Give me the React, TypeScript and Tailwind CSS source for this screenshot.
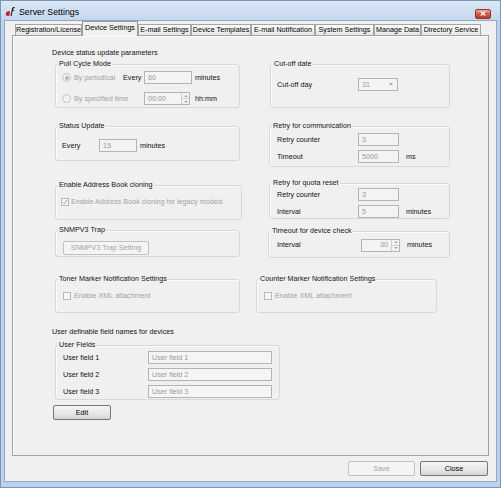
import type { ReactNode } from 'react'

const font = "font-['Liberation_Sans',Arial,sans-serif] text-[7.2px] leading-[10px]"

function Group({ title, className, children }: { title: string; className: string; children?: ReactNode }) {
  return (
    <fieldset className={`shrink-0 rounded-[3px] border border-[#d6d9dc] shadow-[inset_1px_1px_0_#fcfcfc] ${className}`}>
      <legend className="ml-[2px] h-[10px] px-[1px] text-[#111]">{title}</legend>
      {children}
    </fieldset>
  )
}

function Box({ value, className = '' }: { value: string; className?: string }) {
  return (
    <div className={`flex h-[13px] shrink-0 items-center border border-[#b4b4b4] bg-[#f3f3f3] px-[3px] text-[#9a9a9a] ${className}`}>
      {value}
    </div>
  )
}

function Spinner({ value, className = '', align = 'left' }: { value: string; className?: string; align?: 'left' | 'right' }) {
  return (
    <div className={`flex h-[13px] shrink-0 border border-[#b4b4b4] bg-[#f3f3f3] text-[#9a9a9a] ${className}`}>
      <div className={`flex flex-1 items-center px-[3px] ${align === 'right' ? 'justify-end' : ''}`}>{value}</div>
      <div className="flex w-[8px] flex-col border-l border-[#d0d0d0]">
        <div className="flex flex-1 items-center justify-center border-b border-[#d0d0d0]">
          <svg width="4" height="2" viewBox="0 0 4 2">
            <path d="M0 2 L2 0 L4 2Z" fill="#a8a8a8" />
          </svg>
        </div>
        <div className="flex flex-1 items-center justify-center">
          <svg width="4" height="2" viewBox="0 0 4 2">
            <path d="M0 0 L2 2 L4 0Z" fill="#a8a8a8" />
          </svg>
        </div>
      </div>
    </div>
  )
}

function Radio({ checked }: { checked?: boolean }) {
  return (
    <div className="flex h-[9px] w-[9px] shrink-0 items-center justify-center rounded-full border border-[#c2c2c2] bg-[#f2f2f2]">
      {checked && <div className="h-[4px] w-[4px] rounded-full bg-[#b3b3b3]" />}
    </div>
  )
}

function Check({ checked }: { checked?: boolean }) {
  return (
    <div className="flex h-[8px] w-[8px] shrink-0 items-center justify-center border border-[#b9b9b9] bg-[#f6f6f6]">
      {checked && (
        <svg width="6" height="6" viewBox="0 0 6 6">
          <path d="M0.8 3.2 L2.4 4.8 L5.3 0.9" fill="none" stroke="#a0a0a0" strokeWidth="1" />
        </svg>
      )}
    </div>
  )
}

function Button({ label, disabled, className = '' }: { label: string; disabled?: boolean; className?: string }) {
  return (
    <div
      className={`flex shrink-0 items-center justify-center rounded-[2px] border ${
        disabled
          ? 'border-[#bfc3c6] bg-[#f4f4f4] text-[#a3a3a3]'
          : 'border-[#767676] bg-gradient-to-b from-[#f4f4f4] via-[#e9e9e9] to-[#d4d4d4] text-black'
      } ${className}`}
    >
      {label}
    </div>
  )
}

const tabs = [
  { label: 'Registration/License', w: 'w-[67px]' },
  { label: 'Device Settings', w: 'w-[56px]', active: true },
  { label: 'E-mail Settings', w: 'w-[53px]' },
  { label: 'Device Templates', w: 'w-[60px]' },
  { label: 'E-mail Notification', w: 'w-[64px]' },
  { label: 'System Settings', w: 'w-[59px]' },
  { label: 'Manage Data', w: 'w-[47px]' },
  { label: 'Directory Service', w: 'w-[60px]' },
]

export default function App() {
  return (
    <div className={`flex h-[488px] w-[501px] flex-col border border-[#7a96b8] bg-[#bcd2eb] text-[#111] ${font}`}>
      {/* title bar */}
      <div className="flex h-[19px] shrink-0 items-center bg-gradient-to-b from-[#dce8f5] to-[#c3d7ee] pl-[4px] pr-[9px]">
        <svg width="10" height="11" viewBox="0 0 10 11" className="mt-[1px]">
          <path d="M1 9.5 C0 7 2.5 4.5 5 5.5 L4.2 10 Z" fill="#c8171e" />
          <path d="M5.5 10 L7 2.5 C7.4 1 8.6 0.6 9.8 1.2 L9.4 2.3 C8.7 2 8.3 2.3 8.1 3 L7.9 4 L9.3 4 L9 5 L7.6 5 L6.6 10 Z" fill="#1b1b1b" />
        </svg>
        <span className="ml-[4px] mt-[2px] text-[8.8px] text-black">Server Settings</span>
        <div className="ml-auto mt-[6px] flex h-[10px] w-[16px] items-center justify-center rounded-[2px] border border-[#8a3a2c] bg-gradient-to-b from-[#e9a99a] via-[#d2583c] to-[#c03a20]">
          <svg width="6" height="5" viewBox="0 0 6 5">
            <path d="M0.8 0.5 L5.2 4.5 M5.2 0.5 L0.8 4.5" stroke="#fff" strokeWidth="1.3" />
          </svg>
        </div>
      </div>

      {/* body */}
      <div className="mx-[3px] mb-[5px] flex flex-1 flex-col border border-[#8fa8c6] bg-[#f0f0f0] pr-[8px]">
        {/* tabs */}
        <div className="ml-[10px] flex h-[14px] shrink-0 items-end">
          {tabs.map((t) => (
            <div
              key={t.label}
              className={`flex shrink-0 items-center justify-center whitespace-nowrap border border-b-0 text-black ${t.w} ${
                t.active
                  ? 'relative z-10 -mb-px h-[15px] border-[#9a9a9a] bg-[#f0f0f0] pb-[2px]'
                  : 'h-[11px] border-[#a5a5a5] bg-gradient-to-b from-[#fbfbfb] to-[#e6e6e6]'
              }`}
            >
              {t.label}
            </div>
          ))}
        </div>

        {/* panel */}
        <div className="ml-[7px] flex h-[421px] w-[477px] shrink-0 flex-col border border-[#a2a2a2] pl-[42px] shadow-[inset_1px_1px_0_#fbfbfb]">
          <div className="-ml-[3px] mt-[12px] h-[10px]">Device status update parameters</div>

          {/* row 1 */}
          <div className="mt-[1px] flex items-start">
            <Group title="Poll Cycle Mode" className="h-[49px] w-[185px]">
              <div className="mt-[2px] flex h-[13px] items-center pl-[6px]">
                <div className="flex w-[61px] items-center gap-[3px] text-[#a2a2a2]">
                  <Radio checked />
                  <span>By periodical</span>
                </div>
                <span className="w-[21px]">Every</span>
                <Box value="60" className="w-[48px]" />
                <span className="ml-[3px]">minutes</span>
              </div>
              <div className="mt-[8px] flex h-[13px] items-center pl-[6px]">
                <div className="flex w-[82px] items-center gap-[3px] text-[#a2a2a2]">
                  <Radio />
                  <span>By specified time</span>
                </div>
                <Spinner value="00:00" className="w-[46px]" />
                <span className="ml-[5px]">hh:mm</span>
              </div>
            </Group>
            <Group title="Cut-off date" className="ml-[30px] h-[49px] w-[180px]">
              <div className="mt-[9px] flex h-[13px] items-center pl-[6px]">
                <span className="w-[81px]">Cut-off day</span>
                <div className="flex h-[13px] w-[40px] items-center justify-between border border-[#b4b4b4] bg-[#f3f3f3] pl-[3px] pr-[4px] text-[#9a9a9a]">
                  <span>31</span>
                  <svg width="4" height="3" viewBox="0 0 4 3">
                    <path d="M0 0 L2 2.5 L4 0Z" fill="#a0a0a0" />
                  </svg>
                </div>
              </div>
            </Group>
          </div>

          {/* row 2 */}
          <div className="mt-[13px] flex items-start">
            <Group title="Status Update" className="h-[40px] w-[185px]">
              <div className="mt-[8px] flex h-[13px] items-center pl-[6px]">
                <span className="w-[37px]">Every</span>
                <Box value="15" className="w-[38px]" />
                <span className="ml-[3px]">minutes</span>
              </div>
            </Group>
            <Group title="Retry for communication" className="ml-[29px] h-[46px] w-[181px]">
              <div className="mt-[2px] flex h-[13px] items-center pl-[7px]">
                <span className="w-[81px]">Retry counter</span>
                <Box value="3" className="w-[41px]" />
              </div>
              <div className="mt-[4px] flex h-[13px] items-center pl-[7px]">
                <span className="w-[81px]">Timeout</span>
                <Box value="5000" className="w-[41px]" />
                <span className="ml-[7px]">ms</span>
              </div>
            </Group>
          </div>

          {/* row 3 */}
          <div className="mt-[11px] flex items-start">
            <Group title="Enable Address Book cloning" className="mt-[2px] h-[40px] w-[187px]">
              <div className="mt-[7px] flex h-[10px] items-center pl-[5px] text-[#a2a2a2]">
                <Check checked />
                <span className="ml-[2px]">Enable Address Book cloning for legacy models</span>
              </div>
            </Group>
            <Group title="Retry for quota reset" className="ml-[27px] h-[41px] w-[181px]">
              <div className="flex h-[13px] items-center pl-[7px]">
                <span className="w-[81px]">Retry counter</span>
                <Box value="3" className="w-[41px]" />
              </div>
              <div className="mt-[4px] flex h-[13px] items-center pl-[7px]">
                <span className="w-[81px]">Interval</span>
                <Box value="5" className="w-[41px]" />
                <span className="ml-[7px]">minutes</span>
              </div>
            </Group>
          </div>

          {/* row 4 */}
          <div className="mt-[5px] flex items-start">
            <Group title="SNMPV3 Trap" className="h-[32px] w-[185px]">
              <Button label="SNMPV3 Trap Setting" disabled className="ml-[7px] mt-[6px] h-[14px] w-[86px]" />
            </Group>
            <Group title="Timeout for device check" className="ml-[28px] mt-[1px] h-[32px] w-[182px]">
              <div className="mt-[3px] flex h-[12px] items-center pl-[8px]">
                <span className="w-[84px]">Interval</span>
                <Spinner value="30" align="right" className="h-[12px] w-[39px]" />
                <span className="ml-[7px]">minutes</span>
              </div>
            </Group>
          </div>

          {/* row 5 */}
          <div className="mt-[16px] flex items-start">
            <Group title="Toner Marker Notification Settings" className="h-[39px] w-[185px]">
              <div className="mt-[7px] flex h-[10px] items-center pl-[7px] text-[#a2a2a2]">
                <Check />
                <span className="ml-[3px]">Enable XML attachment</span>
              </div>
            </Group>
            <Group title="Counter Marker Notification Settings" className="ml-[16px] h-[39px] w-[181px]">
              <div className="mt-[7px] flex h-[10px] items-center pl-[7px] text-[#a2a2a2]">
                <Check />
                <span className="ml-[3px]">Enable XML attachment</span>
              </div>
            </Group>
          </div>

          <div className="-ml-[3px] mt-[14px] h-[10px]">User definable field names for devices</div>

          <Group title="User Fields" className="mt-[3px] h-[60px] w-[225px]">
            {['User field 1', 'User field 2', 'User field 3'].map((f, i) => (
              <div key={f} className={`flex h-[13px] items-center pl-[7px] ${i === 0 ? 'mt-[1px]' : 'mt-[4px]'}`}>
                <span className="w-[85px]">{f}</span>
                <Box value={f} className="w-[124px] bg-[#f5f5f5]" />
              </div>
            ))}
          </Group>

          <Button label="Edit" className="-ml-[2px] mt-[5px] h-[15px] w-[58px]" />
        </div>

        {/* footer buttons */}
        <div className="mt-[5px] flex justify-end gap-[5px]">
          <Button label="Save" disabled className="h-[15px] w-[67px]" />
          <Button label="Close" className="h-[15px] w-[68px]" />
        </div>
      </div>
    </div>
  )
}
